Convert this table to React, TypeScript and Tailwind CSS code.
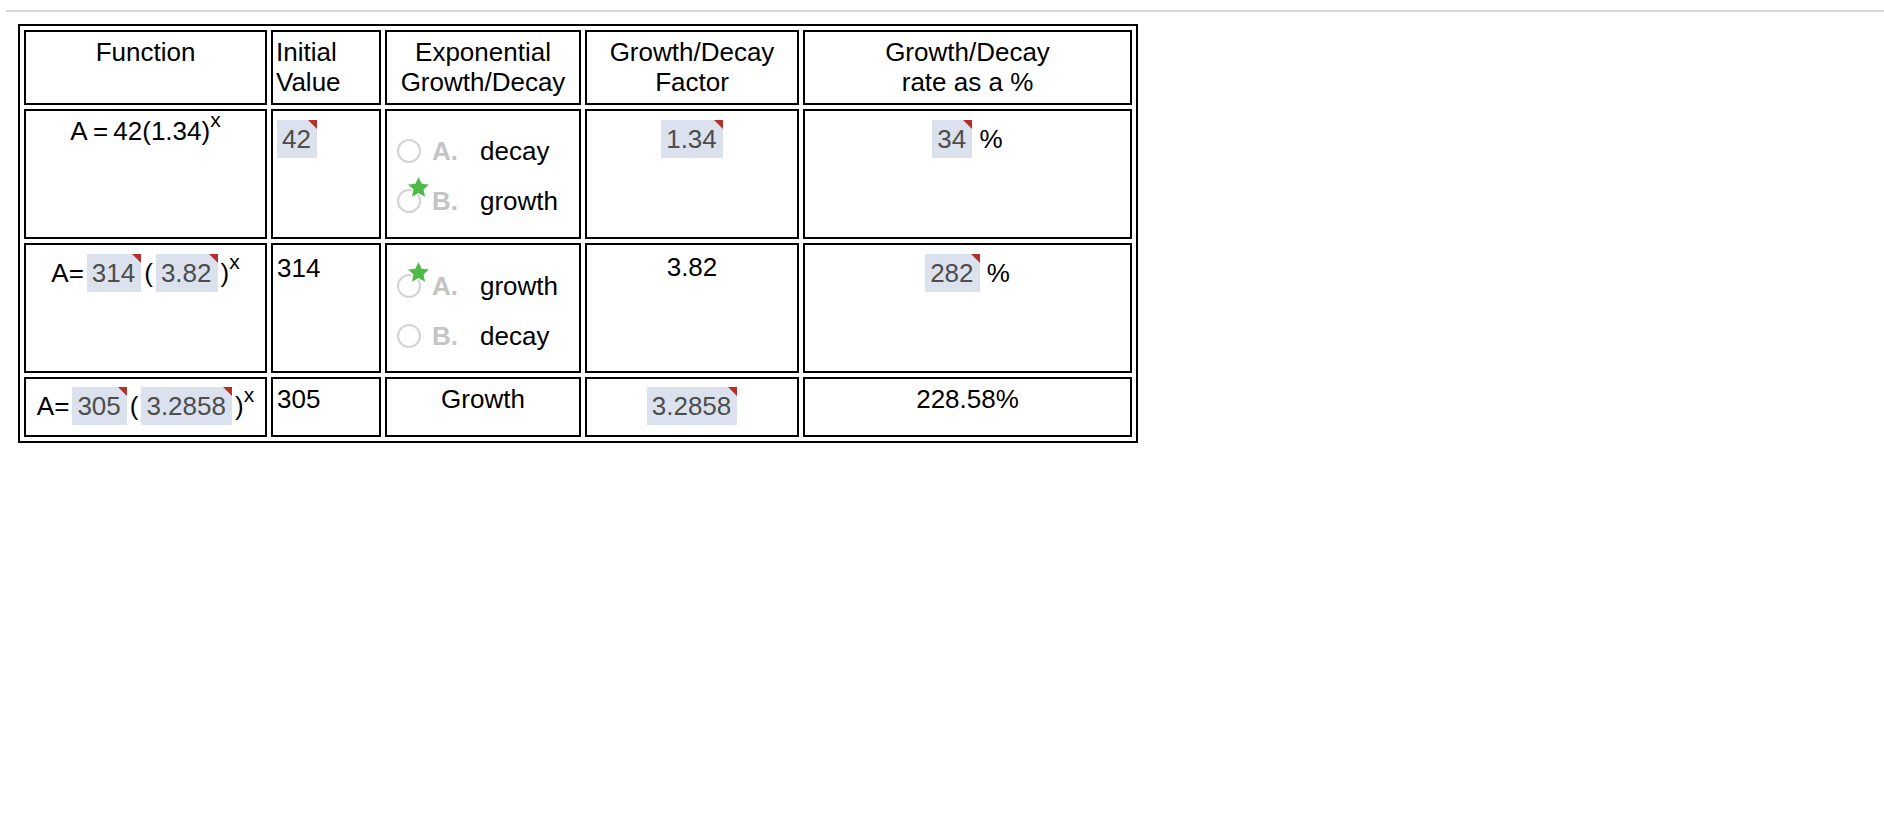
import type { ReactNode } from "react";

type AnswerProps = {
  children: ReactNode;
  className?: string;
};

// blue answer box with the little red "incorrect" flag in the corner
function Answer({ children, className = "" }: AnswerProps) {
  return (
    <span className={`relative inline-block bg-[#dbe2ee] py-[4px] pl-[5px] pr-[6px] leading-[30px] text-[#4d4d4d] ${className}`}>
      {children}
      <span className="absolute right-0 top-0 h-0 w-0 border-l-[9px] border-t-[9px] border-l-transparent border-t-[#b5302a]" />
    </span>
  );
}

function Star() {
  return (
    <svg className="absolute left-[6px] top-[-17px] h-[27px] w-[27px]" viewBox="0 0 24 24">
      <path
        d="M12 1.2l3.2 6.9 7.5.8-5.6 5.1 1.6 7.4L12 17.6l-6.7 3.8 1.6-7.4-5.6-5.1 7.5-.8z"
        fill="#4dbb46"
        stroke="#ffffff"
        strokeWidth="1.2"
      />
    </svg>
  );
}

type ChoiceProps = {
  letter: string;
  label: string;
  starred?: boolean;
};

function Choice({ letter, label, starred }: ChoiceProps) {
  return (
    <div className="flex h-[50px] items-center">
      <span className="relative ml-[5px] h-[24px] w-[24px] shrink-0 rounded-full border-2 border-[#d3d3d3]">
        {starred && <Star />}
      </span>
      <span className="ml-[11px] w-[48px] font-bold text-[#c4c4c4]">{letter}.</span>
      <span>{label}</span>
    </div>
  );
}

function Pow() {
  return <sup className="top-[-0.6em] text-[21px]">x</sup>;
}

const cell = "border-2 border-black p-[5px] align-top";

export default function App() {
  return (
    <div className="min-h-screen bg-white font-['Liberation_Sans',Arial,sans-serif] text-[26px] leading-[30px] text-black">
      <div className="ml-[6px] pt-[10px]">
        <div className="h-[2px] bg-[#d5d8e0]" />
      </div>

      <table className="ml-[18px] mt-[12px] border-separate border-spacing-[4px] border-2 border-black">
        <thead>
          <tr>
            <th className={`${cell} h-[75px] w-[243px] text-center font-normal`}>Function</th>
            <th className={`${cell} w-[110px] pl-[3px] text-left font-normal`}>
              Initial
              <br />
              Value
            </th>
            <th className={`${cell} w-[196px] text-center font-normal`}>
              Exponential
              <br />
              Growth/Decay
            </th>
            <th className={`${cell} w-[214px] text-center font-normal`}>
              Growth/Decay
              <br />
              Factor
            </th>
            <th className={`${cell} w-[329px] text-center font-normal`}>
              Growth/Decay
              <br />
              rate as a %
            </th>
          </tr>
        </thead>
        <tbody>
          <tr>
            <td className={`${cell} h-[130px] text-center`}>
              A{"\u2009"}={"\u2009"}42(1.34)
              <Pow />
            </td>
            <td className={`${cell} pl-[4px] pt-[9px]`}>
              <Answer>42</Answer>
            </td>
            <td className={`${cell} pt-[15px]`}>
              <Choice letter="A" label="decay" />
              <Choice letter="B" label="growth" starred />
            </td>
            <td className={`${cell} pt-[9px] text-center`}>
              <Answer>1.34</Answer>
            </td>
            <td className={`${cell} pt-[9px] text-center`}>
              <Answer>34</Answer> %
            </td>
          </tr>

          <tr>
            <td className={`${cell} h-[130px] pt-[9px] text-center`}>
              A=
              <Answer className="mx-[3px]">314</Answer>(
              <Answer className="mx-[3px]">3.82</Answer>)
              <Pow />
            </td>
            <td className={`${cell} pl-[4px] pt-[8px]`}>314</td>
            <td className={`${cell} pt-[16px]`}>
              <Choice letter="A" label="growth" starred />
              <Choice letter="B" label="decay" />
            </td>
            <td className={`${cell} pt-[7px] text-center`}>3.82</td>
            <td className={`${cell} pt-[9px] text-center`}>
              <Answer>282</Answer> %
            </td>
          </tr>

          <tr>
            <td className={`${cell} h-[60px] pb-[3px] pt-[8px] text-center`}>
              A=
              <Answer className="mx-[3px]">305</Answer>(
              <Answer className="mx-[3px]">3.2858</Answer>)
              <Pow />
            </td>
            <td className={`${cell} pl-[4px] pt-[5px]`}>305</td>
            <td className={`${cell} pt-[5px] text-center`}>Growth</td>
            <td className={`${cell} pb-[3px] pt-[8px] text-center`}>
              <Answer>3.2858</Answer>
            </td>
            <td className={`${cell} pt-[5px] text-center`}>228.58%</td>
          </tr>
        </tbody>
      </table>
    </div>
  );
}
